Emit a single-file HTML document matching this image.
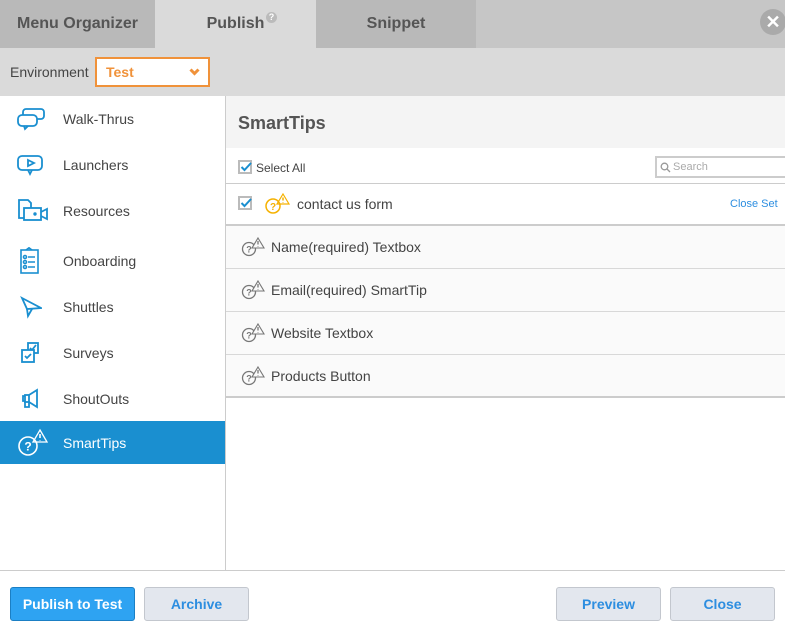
<!DOCTYPE html>
<html><head><meta charset="utf-8">
<style>
*{margin:0;padding:0;box-sizing:border-box}
body{width:785px;height:630px;overflow:hidden;font-family:"Liberation Sans",Arial,sans-serif;background:#fff;position:relative;color:#444}
.a{position:absolute}
.tab{position:absolute;top:0;height:48px;line-height:48px;text-align:center;font-weight:bold;font-size:16px;color:#555}
.nav{position:absolute;left:0;width:225px;height:44px;font-size:14px;color:#444}
.nav span{position:absolute;left:63px;top:50%;transform:translateY(-50%)}
.nav svg{position:absolute;left:16px;top:50%;transform:translateY(-50%)}
.row{position:absolute;left:226px;width:559px;background:#fafafa;border-bottom:1px solid #d8d8d8;font-size:14px;color:#444}
.row span{position:absolute;left:45px;top:50%;transform:translateY(-50%)}
.row svg{position:absolute;left:14px;top:50%;transform:translateY(-50%)}
.btn{position:absolute;top:587px;height:34px;border-radius:3px;font-weight:bold;font-size:14px;text-align:center;line-height:32px}
.g{background:#e3e7ee;border:1px solid #c3c7ce;color:#2d8ee0}
.cb{position:absolute;width:14px;height:14px;border:2px solid #bbb;background:#fff}
</style></head><body>
<div class="a" style="left:0;top:0;width:785px;height:48px;background:#c6c6c6"></div>
<div class="tab" style="left:0;width:155px;background:#b9b9b9">Menu Organizer</div>
<div class="tab" style="left:155px;width:161px;background:#dadada">Publish</div>
<div class="a" style="left:266px;top:12px;width:11px;height:11px;border-radius:50%;background:#bbb;color:#fff;font-size:9px;line-height:11px;text-align:center;font-weight:bold">?</div>
<div class="tab" style="left:316px;width:160px;background:#b9b9b9">Snippet</div>
<div class="a" style="left:760px;top:9px;width:26px;height:26px;border-radius:50%;background:#aaa;color:#fff;font-weight:bold;font-size:18px;line-height:26px;text-align:center">✕</div>
<div class="a" style="left:0;top:48px;width:785px;height:48px;background:#dadada"></div>
<div class="a" style="left:10px;top:64px;font-size:14px;color:#444">Environment</div>
<div class="a" style="left:95px;top:57px;width:115px;height:30px;border:2px solid #f0923a;background:#fff;color:#f0923a;font-weight:bold;font-size:14px;line-height:26px;padding-left:9px">Test<svg class="a" style="right:8px;top:9px" width="11" height="8" viewBox="0 0 11 8"><path d="M1.5 1.5 L5.5 5.5 L9.5 1.5" stroke="#f0923a" stroke-width="3" fill="none"/></svg></div>

<div class="a" style="left:225px;top:96px;width:1px;height:475px;background:#ccc"></div>

<div class="nav" style="top:97px"><svg width="30" height="24" viewBox="0 0 30 24" fill="none" stroke="#1a8fd0" stroke-width="1.8"><rect x="7" y="2" width="21" height="10" rx="3"/><rect x="2" y="8" width="19" height="11" rx="4" fill="#fff"/><path d="M8 19 L9 22 L12 19"/></svg><span>Walk-Thrus</span></div>
<div class="nav" style="top:143px"><svg width="30" height="24" viewBox="0 0 30 24" fill="none" stroke="#1a8fd0" stroke-width="1.8"><rect x="2" y="3" width="24" height="14" rx="4"/><path d="M12 17 L14 21 L16 17"/><path d="M12 7 L18 10 L12 13 Z"/></svg><span>Launchers</span></div>
<div class="nav" style="top:189px"><svg width="34" height="26" viewBox="0 0 34 26" fill="none" stroke="#1a8fd0" stroke-width="1.8"><path d="M3 2 H12 L15 5 V20 H3 Z"/><rect x="8" y="10" width="17" height="12" fill="#fff"/><path d="M25 14 L31 11 V21 L25 18"/><circle cx="19" cy="16" r="0.8" fill="#1a8fd0"/></svg><span>Resources</span></div>
<div class="nav" style="top:239px"><svg width="26" height="28" viewBox="0 0 26 28" fill="none" stroke="#1a8fd0" stroke-width="1.6"><rect x="5" y="3" width="17" height="23"/><path d="M10 3 L13 0.8 L16 3"/><circle cx="9" cy="10" r="1.5"/><circle cx="9" cy="15" r="1.5"/><circle cx="9" cy="20" r="1.5"/><path d="M12 10 H19 M12 15 H19 M12 20 H19"/></svg><span>Onboarding</span></div>
<div class="nav" style="top:285px"><svg width="26" height="26" viewBox="0 0 26 26" fill="none" stroke="#1a8fd0" stroke-width="1.8"><path d="M6 4 L25 14 L11 15 Z"/><path d="M11 15 L12 22 L16 15"/></svg><span>Shuttles</span></div>
<div class="nav" style="top:331px"><svg width="26" height="26" viewBox="0 0 26 26" fill="none" stroke="#1a8fd0" stroke-width="1.8"><rect x="12" y="3" width="10" height="10"/><path d="M14 8 L16 10 L20 5"/><rect x="6" y="10" width="12" height="12" fill="#fff"/><path d="M9 16 L11 18 L15 14"/></svg><span>Surveys</span></div>
<div class="nav" style="top:377px"><svg width="26" height="26" viewBox="0 0 26 26" fill="none" stroke="#1a8fd0" stroke-width="1.8"><rect x="9" y="9" width="4" height="7"/><path d="M13 9 L21 4 V21 L13 16"/><path d="M9 16 V21 H13 V16"/><path d="M9 10 H7 V15 H9"/></svg><span>ShoutOuts</span></div>
<div class="nav" style="top:421px;height:43px;background:#1a8fd0;color:#fff"><svg width="34" height="30" viewBox="0 0 34 30" fill="none" stroke="#fff" stroke-width="1.6"><circle cx="12" cy="18" r="9"/><text x="12" y="22.5" font-size="12" font-weight="bold" fill="#fff" stroke="none" text-anchor="middle" font-family="Liberation Sans">?</text><path d="M24 2 L31 14 H17 Z" stroke-width="1.3"/><path d="M24 6 V10 M24 12 V12.5"/></svg><span>SmartTips</span></div>

<div class="a" style="left:226px;top:96px;width:559px;height:52px;background:#f4f4f4"></div>
<div class="a" style="left:238px;top:113px;font-weight:bold;font-size:18px;color:#555">SmartTips</div>
<div class="a" style="left:226px;top:183px;width:559px;height:1px;background:#ccc"></div>
<div class="cb" style="left:238px;top:160px"><svg style="position:absolute;left:0;top:-1px" width="12" height="12" viewBox="0 0 12 12"><path d="M1.5 6 L4.5 9 L11 2" stroke="#1a8fd0" stroke-width="2" fill="none"/></svg></div>
<div class="a" style="left:256px;top:161px;font-size:12px;color:#444">Select All</div>
<div class="a" style="left:655px;top:156px;width:140px;height:22px;border:2px solid #ccc;background:#fff;font-size:11px;color:#aaa;line-height:18px;padding-left:16px">Search<svg class="a" style="left:3px;top:4px" width="11" height="11" viewBox="0 0 11 11" fill="none" stroke="#999" stroke-width="1.3"><circle cx="4.5" cy="4.5" r="3.3"/><path d="M7 7 L10 10"/></svg></div>

<div class="cb" style="left:238px;top:196px"><svg style="position:absolute;left:0;top:-1px" width="12" height="12" viewBox="0 0 12 12"><path d="M1.5 6 L4.5 9 L11 2" stroke="#1a8fd0" stroke-width="2" fill="none"/></svg></div>
<svg class="a" style="left:264px;top:193px" width="28" height="22" viewBox="0 0 28 22" fill="none" stroke="#f5b100" stroke-width="1.5"><circle cx="9" cy="13" r="7"/><text x="9" y="17" font-size="10" font-weight="bold" fill="#f5b100" stroke="none" text-anchor="middle" font-family="Liberation Sans">?</text><path d="M19 1 L25 11 H13 Z" stroke-width="1.2"/><path d="M19 4.5 V7.5 M19 9 V9.5"/></svg>
<div class="a" style="left:297px;top:196px;font-size:14px;color:#444">contact us form</div>
<div class="a" style="left:730px;top:198px;font-size:11px;color:#2d8ee0">Close Set</div>
<div class="a" style="left:226px;top:224px;width:559px;height:2px;background:#ccc"></div>

<div class="row" style="top:226px;height:43px"><svg width="26" height="22" viewBox="0 0 26 22" fill="none" stroke="#777" stroke-width="1.3"><circle cx="9" cy="13" r="6.5"/><text x="9" y="16.5" font-size="9" font-weight="bold" fill="#777" stroke="none" text-anchor="middle" font-family="Liberation Sans">?</text><path d="M18 2 L24 12 H12 Z" fill="#fafafa" stroke-width="1.1"/><path d="M18 5 V8.5 M18 10 V10.5"/></svg><span>Name(required) Textbox</span></div>
<div class="row" style="top:269px;height:43px"><svg width="26" height="22" viewBox="0 0 26 22" fill="none" stroke="#777" stroke-width="1.3"><circle cx="9" cy="13" r="6.5"/><text x="9" y="16.5" font-size="9" font-weight="bold" fill="#777" stroke="none" text-anchor="middle" font-family="Liberation Sans">?</text><path d="M18 2 L24 12 H12 Z" fill="#fafafa" stroke-width="1.1"/><path d="M18 5 V8.5 M18 10 V10.5"/></svg><span>Email(required) SmartTip</span></div>
<div class="row" style="top:312px;height:43px"><svg width="26" height="22" viewBox="0 0 26 22" fill="none" stroke="#777" stroke-width="1.3"><circle cx="9" cy="13" r="6.5"/><text x="9" y="16.5" font-size="9" font-weight="bold" fill="#777" stroke="none" text-anchor="middle" font-family="Liberation Sans">?</text><path d="M18 2 L24 12 H12 Z" fill="#fafafa" stroke-width="1.1"/><path d="M18 5 V8.5 M18 10 V10.5"/></svg><span>Website Textbox</span></div>
<div class="row" style="top:355px;height:43px;border-bottom:2px solid #ccc"><svg width="26" height="22" viewBox="0 0 26 22" fill="none" stroke="#777" stroke-width="1.3"><circle cx="9" cy="13" r="6.5"/><text x="9" y="16.5" font-size="9" font-weight="bold" fill="#777" stroke="none" text-anchor="middle" font-family="Liberation Sans">?</text><path d="M18 2 L24 12 H12 Z" fill="#fafafa" stroke-width="1.1"/><path d="M18 5 V8.5 M18 10 V10.5"/></svg><span>Products Button</span></div>

<div class="a" style="left:0;top:570px;width:785px;height:1px;background:#ccc"></div>
<div class="btn" style="left:10px;width:125px;background:#2ea3f2;border:1px solid #1b7fc4;color:#fff">Publish to Test</div>
<div class="btn g" style="left:144px;width:105px">Archive</div>
<div class="btn g" style="left:556px;width:105px">Preview</div>
<div class="btn g" style="left:670px;width:105px">Close</div>
</body></html>
